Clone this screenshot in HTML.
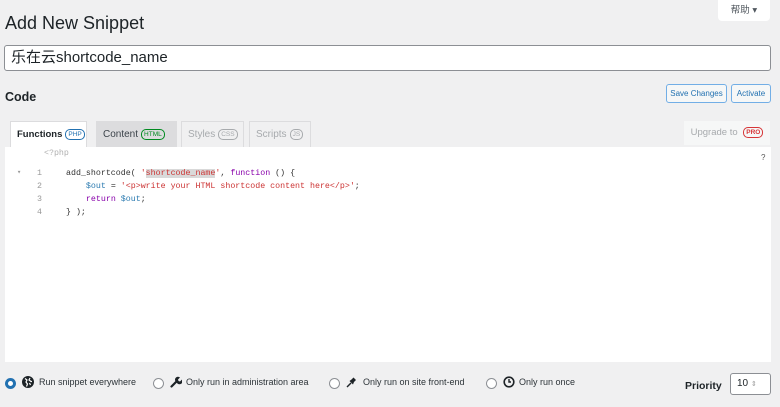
<html><head><style>
body{margin:0;width:780px;height:407px;background:#f0f0f1;font-family:"Liberation Sans","Noto Sans CJK SC",sans-serif;position:relative;overflow:hidden;color:#1d2327}
.a{position:absolute;white-space:nowrap}
.tab{position:absolute;top:121px;height:26px;border:1px solid #dcdcde;border-bottom:none;font-size:10px;line-height:26px;padding:0 6px;box-sizing:border-box;background:#f0f0f1;white-space:nowrap}
.b{display:inline-block;font-size:6.5px;border:1px solid;border-radius:5px;padding:0 2px;line-height:9px;margin-left:3px;vertical-align:1px;font-weight:normal}
.code{font-family:"Liberation Mono",monospace;font-size:8.3px;white-space:pre;line-height:13px}
.btn{position:absolute;top:84px;height:19px;border:1px solid #72aee6;border-radius:3px;color:#2271b1;font-size:8px;line-height:17px;text-align:center;box-sizing:border-box;background:#f6f7f7}
.r{position:absolute;top:378px;width:11px;height:11px;border:1px solid #8c8f94;border-radius:50%;background:#fff;box-sizing:border-box}
.l{position:absolute;top:377px;font-size:9px;color:#2c3338;white-space:nowrap}
svg{position:absolute}
</style></head><body>
<div class="a" style="left:718px;top:0;width:52px;height:21px;background:#fff;border-radius:0 0 4px 4px;font-size:9.5px;line-height:21px;text-align:center;color:#50575e">帮助 ▾</div>
<div class="a" style="left:5px;top:13px;font-size:18px">Add New Snippet</div>
<div class="a" style="left:4px;top:45px;width:767px;height:26px;background:#fff;border:1px solid #8c8f94;border-radius:3px;box-sizing:border-box;font-size:15px;line-height:24px;padding-left:6px">乐在云shortcode_name</div>
<div class="a" style="left:5px;top:90px;font-size:12.5px;font-weight:bold">Code</div>
<div class="btn" style="left:666px;width:61px">Save Changes</div>
<div class="btn" style="left:731px;width:40px">Activate</div>
<div class="tab" style="left:10px;width:77px;background:#fff;font-weight:bold;font-size:9.5px">Functions<span class="b" style="color:#2271b1">PHP</span></div>
<div class="tab" style="left:96px;width:81px;background:#dcdcde;color:#3c434a">Content<span class="b" style="color:#008a20">HTML</span></div>
<div class="tab" style="left:181px;width:63px;color:#a7aaad">Styles<span class="b">CSS</span></div>
<div class="tab" style="left:249px;width:62px;color:#a7aaad">Scripts<span class="b">JS</span></div>
<div class="a" style="left:684px;top:121px;width:86px;height:24px;background:#f6f7f7;font-size:9.5px;line-height:24px;text-align:center;color:#a7aaad">Upgrade to <span class="b" style="color:#d63638;font-weight:bold;border-color:#d63638">PRO</span></div>
<div class="a" style="left:5px;top:147px;width:766px;height:215px;background:#fff"></div>
<div class="a code" style="left:44px;top:147px;color:#b0b0b0">&lt;?php</div>
<div class="a" style="left:761px;top:153px;font-size:8px;color:#555">?</div>
<div class="a code" style="left:17px;top:167px;color:#999;font-size:7px">▾</div>
<div class="a code" style="left:30px;top:167px;width:12px;color:#999;text-align:right">1
2
3
4</div>
<div class="a code" style="left:66px;top:167px;color:#333">add_shortcode( <span style="color:#c33">'<span style="background:#d9d9d9">shortcode_name</span>'</span>, <span style="color:#80a">function</span> () {
    <span style="color:#2a7ab0">$out</span> = <span style="color:#c33">'&lt;p&gt;write your HTML shortcode content here&lt;/p&gt;'</span>;
    <span style="color:#80a">return</span> <span style="color:#2a7ab0">$out</span>;
} );</div>
<div class="r" style="left:5px;border:3px solid #2271b1;background:#fff"></div>
<svg style="left:22px;top:376px" width="12" height="12" viewBox="0 0 12 12"><circle cx="6" cy="6" r="6" fill="#1d2327"/><path d="M3 2.5l2 1.5-1 2 1.5 2-1 2.5M8 2l-1 2 2 1.5 1 0M7.5 7l1 2" stroke="#fff" stroke-width="1.2" fill="none"/></svg>
<div class="l" style="left:39px">Run snippet everywhere</div>
<div class="r" style="left:153px"></div>
<svg style="left:170px;top:376px" width="12" height="12" viewBox="0 0 12 12"><path d="M1.5 10.5l5-5" stroke="#1d2327" stroke-width="2.2" stroke-linecap="round"/><path d="M6 6a3 3 0 0 1 4-4.5l-2 2 .5 1.5 1.5.5 2-2A3 3 0 0 1 7 7z" fill="#1d2327"/></svg>
<div class="l" style="left:186px">Only run in administration area</div>
<div class="r" style="left:329px"></div>
<svg style="left:346px;top:376px" width="12" height="12" viewBox="0 0 12 12"><path d="M1 11l4-4" stroke="#1d2327" stroke-width="1.4"/><path d="M3.5 5l3.5 3.5 1-2.5 2-2-2.5-2.5-2 2z" fill="#1d2327"/></svg>
<div class="l" style="left:363px">Only run on site front-end</div>
<div class="r" style="left:486px"></div>
<svg style="left:503px;top:376px" width="12" height="12" viewBox="0 0 12 12"><circle cx="6" cy="6" r="4.8" fill="none" stroke="#1d2327" stroke-width="1.6"/><path d="M6 3v3h2" stroke="#1d2327" stroke-width="1.4" fill="none"/></svg>
<div class="l" style="left:519px">Only run once</div>
<div class="a" style="left:685px;top:380px;font-size:10.5px;font-weight:bold">Priority</div>
<div class="a" style="left:730px;top:373px;width:41px;height:22px;background:#fff;border:1px solid #8c8f94;border-radius:3px;box-sizing:border-box;font-size:10px;line-height:20px;padding-left:6px">10 <span style="color:#999;font-size:7px">⇕</span></div>
</body></html>
